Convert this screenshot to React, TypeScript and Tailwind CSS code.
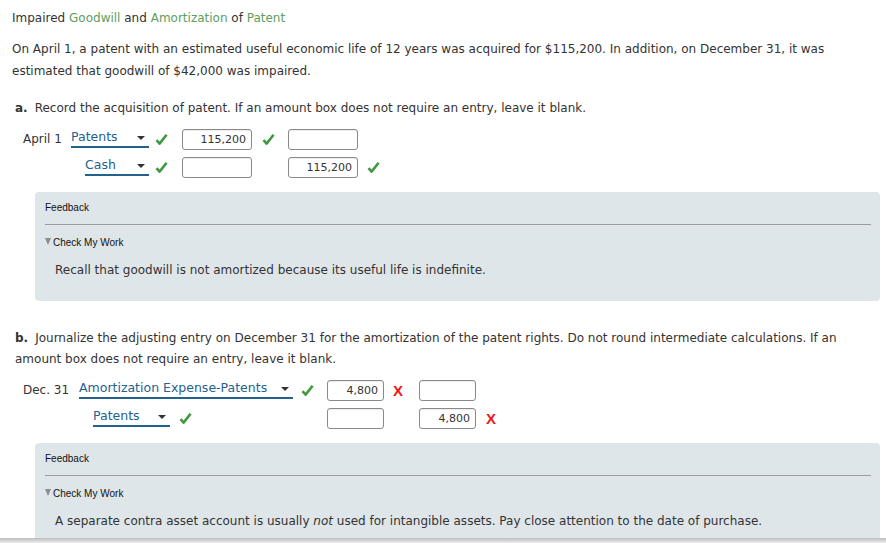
import React from 'react';

function Check() {
  return (
    <svg width="13" height="13" viewBox="0 0 13 13" className="shrink-0">
      <path d="M1.5 7.2 L4.6 10.6 L11.6 1.8" fill="none" stroke="#3f9a3f" strokeWidth="2.6" strokeLinejoin="round" />
    </svg>
  );
}

function Wrong() {
  return <span className="font-['Liberation_Sans',sans-serif] font-bold text-[15px] leading-none text-[#f01515]">X</span>;
}

function Select({ label, className }: { label: string; className: string }) {
  return (
    <div className={`flex items-center justify-between h-[18px] border-b-2 border-[#23618f] text-[#23618f] text-[12.5px] pr-[4px] ${className}`}>
      <span className="leading-[16px] -mt-[3px]">{label}</span>
      <span className="w-0 h-0 border-l-[4px] border-r-[4px] border-t-[4px] border-l-transparent border-r-transparent border-t-[#333]" />
    </div>
  );
}

function Amount({ value, className }: { value?: string; className: string }) {
  return (
    <div className={`h-[21px] border border-[#8a8a8a] rounded-[3px] bg-white shadow-[inset_0_1px_1px_rgba(0,0,0,0.08)] text-right pr-[5px] text-[11px] leading-[19px] text-[#333] ${className}`}>
      {value}
    </div>
  );
}

function Feedback({ children }: { children: React.ReactNode }) {
  return (
    <div className="ml-[23px] bg-[#dfe6ea] rounded-[4px] px-[10px] pt-[10px] pb-[22px]">
      <div className="font-['Liberation_Sans',sans-serif] text-[10px] leading-[12px] text-[#111]">Feedback</div>
      <div className="mt-[10px] border-t border-[#9a9da0] mr-[-1px]" />
      <div className="mt-[12px] flex items-center font-['Liberation_Sans',sans-serif] text-[10px] leading-[12px] text-[#111]">
        <span className="w-0 h-0 mr-[2px] -mt-[3px] border-l-[3px] border-r-[3px] border-t-[7px] border-l-transparent border-r-transparent border-t-[#8d8d8d]" />
        Check My Work
      </div>
      <p className="mt-[12px] ml-[10px] leading-[18px] text-[#333]">{children}</p>
    </div>
  );
}

export default function App() {
  return (
    <div className="font-['DejaVu_Sans',Verdana,sans-serif] text-[12px] text-[#333] pl-3 pr-[6px] pt-[9px] bg-white min-h-[543px]">
      <h1 className="leading-[18px]">
        Impaired <span className="text-[#5e9e5e]">Goodwill</span> and{' '}
        <span className="text-[#5e9e5e]">Amortization</span> of <span className="text-[#5e9e5e]">Patent</span>
      </h1>

      <p className="mt-[11px] leading-[22px]">
        On April 1, a patent with an estimated useful economic life of 12 years was acquired for $115,200. In addition, on
        December 31, it was estimated that goodwill of $42,000 was impaired.
      </p>

      <p className="mt-[15px] ml-[3px] leading-[22px]">
        <b className="inline-block mr-[7px]">a.</b>Record the acquisition of patent. If an amount box does not require an entry, leave it blank.
      </p>

      <div className="mt-[9px] flex flex-col gap-[6px]">
        <div className="flex items-center h-[22px]">
          <div className="w-[170px] flex items-center">
            <span className="w-[59px] pl-[11px]">April 1</span>
            <Select label="Patents" className="w-[78px]" />
            <span className="ml-[6px]"><Check /></span>
          </div>
          <Amount value="115,200" className="w-[70px]" />
          <div className="w-[36px] flex pl-[10px]"><Check /></div>
          <Amount className="w-[70px]" />
        </div>
        <div className="flex items-center h-[22px]">
          <div className="w-[170px] flex items-center">
            <Select label="Cash" className="ml-[73px] w-[64px]" />
            <span className="ml-[6px]"><Check /></span>
          </div>
          <Amount className="w-[70px]" />
          <div className="w-[36px]" />
          <Amount value="115,200" className="w-[70px]" />
          <div className="w-[28px] flex pl-[9px]"><Check /></div>
        </div>
      </div>

      <div className="mt-[14px]">
        <Feedback>Recall that goodwill is not amortized because its useful life is indefinite.</Feedback>
      </div>

      <p className="mt-[27px] ml-[3px] leading-[21px]">
        <b className="inline-block mr-[7px]">b.</b>Journalize the adjusting entry on December 31 for the amortization of the patent rights. Do not round
        intermediate calculations. If an amount box does not require an entry, leave it blank.
      </p>

      <div className="mt-[9px] flex flex-col gap-[6px]">
        <div className="flex items-center h-[22px]">
          <div className="w-[315px] flex items-center">
            <span className="w-[67px] pl-[11px]">Dec. 31</span>
            <Select label="Amortization Expense-Patents" className="w-[214px]" />
            <span className="ml-[8px]"><Check /></span>
          </div>
          <Amount value="4,800" className="w-[57px]" />
          <div className="w-[35px] flex pl-[9px]"><Wrong /></div>
          <Amount className="w-[57px]" />
        </div>
        <div className="flex items-center h-[22px]">
          <div className="w-[315px] flex items-center">
            <Select label="Patents" className="ml-[81px] w-[77px]" />
            <span className="ml-[9px]"><Check /></span>
          </div>
          <Amount className="w-[57px]" />
          <div className="w-[35px]" />
          <Amount value="4,800" className="w-[57px]" />
          <div className="w-[30px] flex pl-[10px]"><Wrong /></div>
        </div>
      </div>

      <div className="mt-[14px]">
        <Feedback>
          A separate contra asset account is usually <i>not</i> used for intangible assets. Pay close attention to the date
          of purchase.
        </Feedback>
      </div>

      <div className="fixed left-0 right-0 bottom-0 h-[5px] bg-gradient-to-b from-[#bdbdbd] to-[#ececec]" />
    </div>
  );
}
